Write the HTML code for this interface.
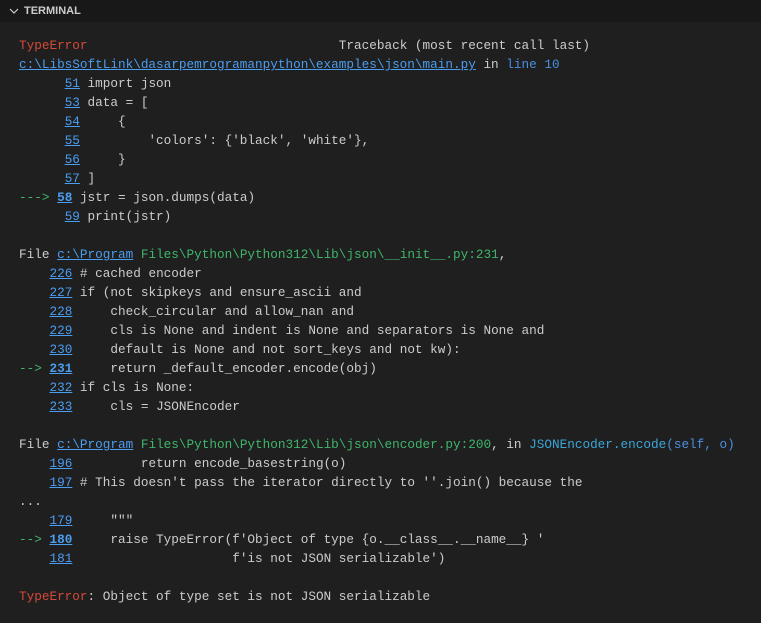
<!DOCTYPE html>
<html><head><meta charset="utf-8"><style>
html,body{margin:0;padding:0;background:#1f1f1f;width:761px;height:623px;overflow:hidden}
.hdr{height:22px;background:#181818;color:#cccccc;font:bold 11px "Liberation Sans",sans-serif;display:flex;align-items:center}
.hdr svg{margin-left:8px;margin-right:4px}
pre{margin:0;position:absolute;top:36px;left:19px;font-family:"Liberation Mono","DejaVu Sans Mono",monospace;font-size:12.7px;line-height:19px;color:#cccccc;white-space:pre}
.r{color:#d6493a}.l{color:#4b9df0;text-decoration:underline}.g{color:#3fb56a}.c{color:#3ba6d8}.b{color:#4b8fe0}
.a{color:#3fb56a}.lb{color:#4b9df0;text-decoration:underline;font-weight:bold}
</style></head><body>
<div class="hdr"><svg width="12" height="12" viewBox="0 0 12 12"><path d="M2 4 L6 8 L10 4" stroke="#cccccc" stroke-width="1.2" fill="none"/></svg>TERMINAL</div>
<pre><span class="r">TypeError</span>                                 Traceback (most recent call last)
<span class="l">c:\LibsSoftLink\dasarpemrogramanpython\examples\json\main.py</span> in <span class="b">line 10</span>
      <span class="l">51</span> import json
      <span class="l">53</span> data = [
      <span class="l">54</span>     {
      <span class="l">55</span>         'colors': {'black', 'white'},
      <span class="l">56</span>     }
      <span class="l">57</span> ]
<span class="a">---&gt;</span> <span class="lb">58</span> jstr = json.dumps(data)
      <span class="l">59</span> print(jstr)

File <span class="l">c:\Program</span> <span class="g">Files\Python\Python312\Lib\json\__init__.py:231</span>,
    <span class="l">226</span> # cached encoder
    <span class="l">227</span> if (not skipkeys and ensure_ascii and
    <span class="l">228</span>     check_circular and allow_nan and
    <span class="l">229</span>     cls is None and indent is None and separators is None and
    <span class="l">230</span>     default is None and not sort_keys and not kw):
<span class="a">--&gt;</span> <span class="lb">231</span>     return _default_encoder.encode(obj)
    <span class="l">232</span> if cls is None:
    <span class="l">233</span>     cls = JSONEncoder

File <span class="l">c:\Program</span> <span class="g">Files\Python\Python312\Lib\json\encoder.py:200</span>, in <span class="c">JSONEncoder.encode</span><span class="b">(self, o)</span>
    <span class="l">196</span>         return encode_basestring(o)
    <span class="l">197</span> # This doesn't pass the iterator directly to ''.join() because the
...
    <span class="l">179</span>     """
<span class="a">--&gt;</span> <span class="lb">180</span>     raise TypeError(f'Object of type {o.__class__.__name__} '
    <span class="l">181</span>                     f'is not JSON serializable')

<span class="r">TypeError</span>: Object of type set is not JSON serializable</pre>
</body></html>
